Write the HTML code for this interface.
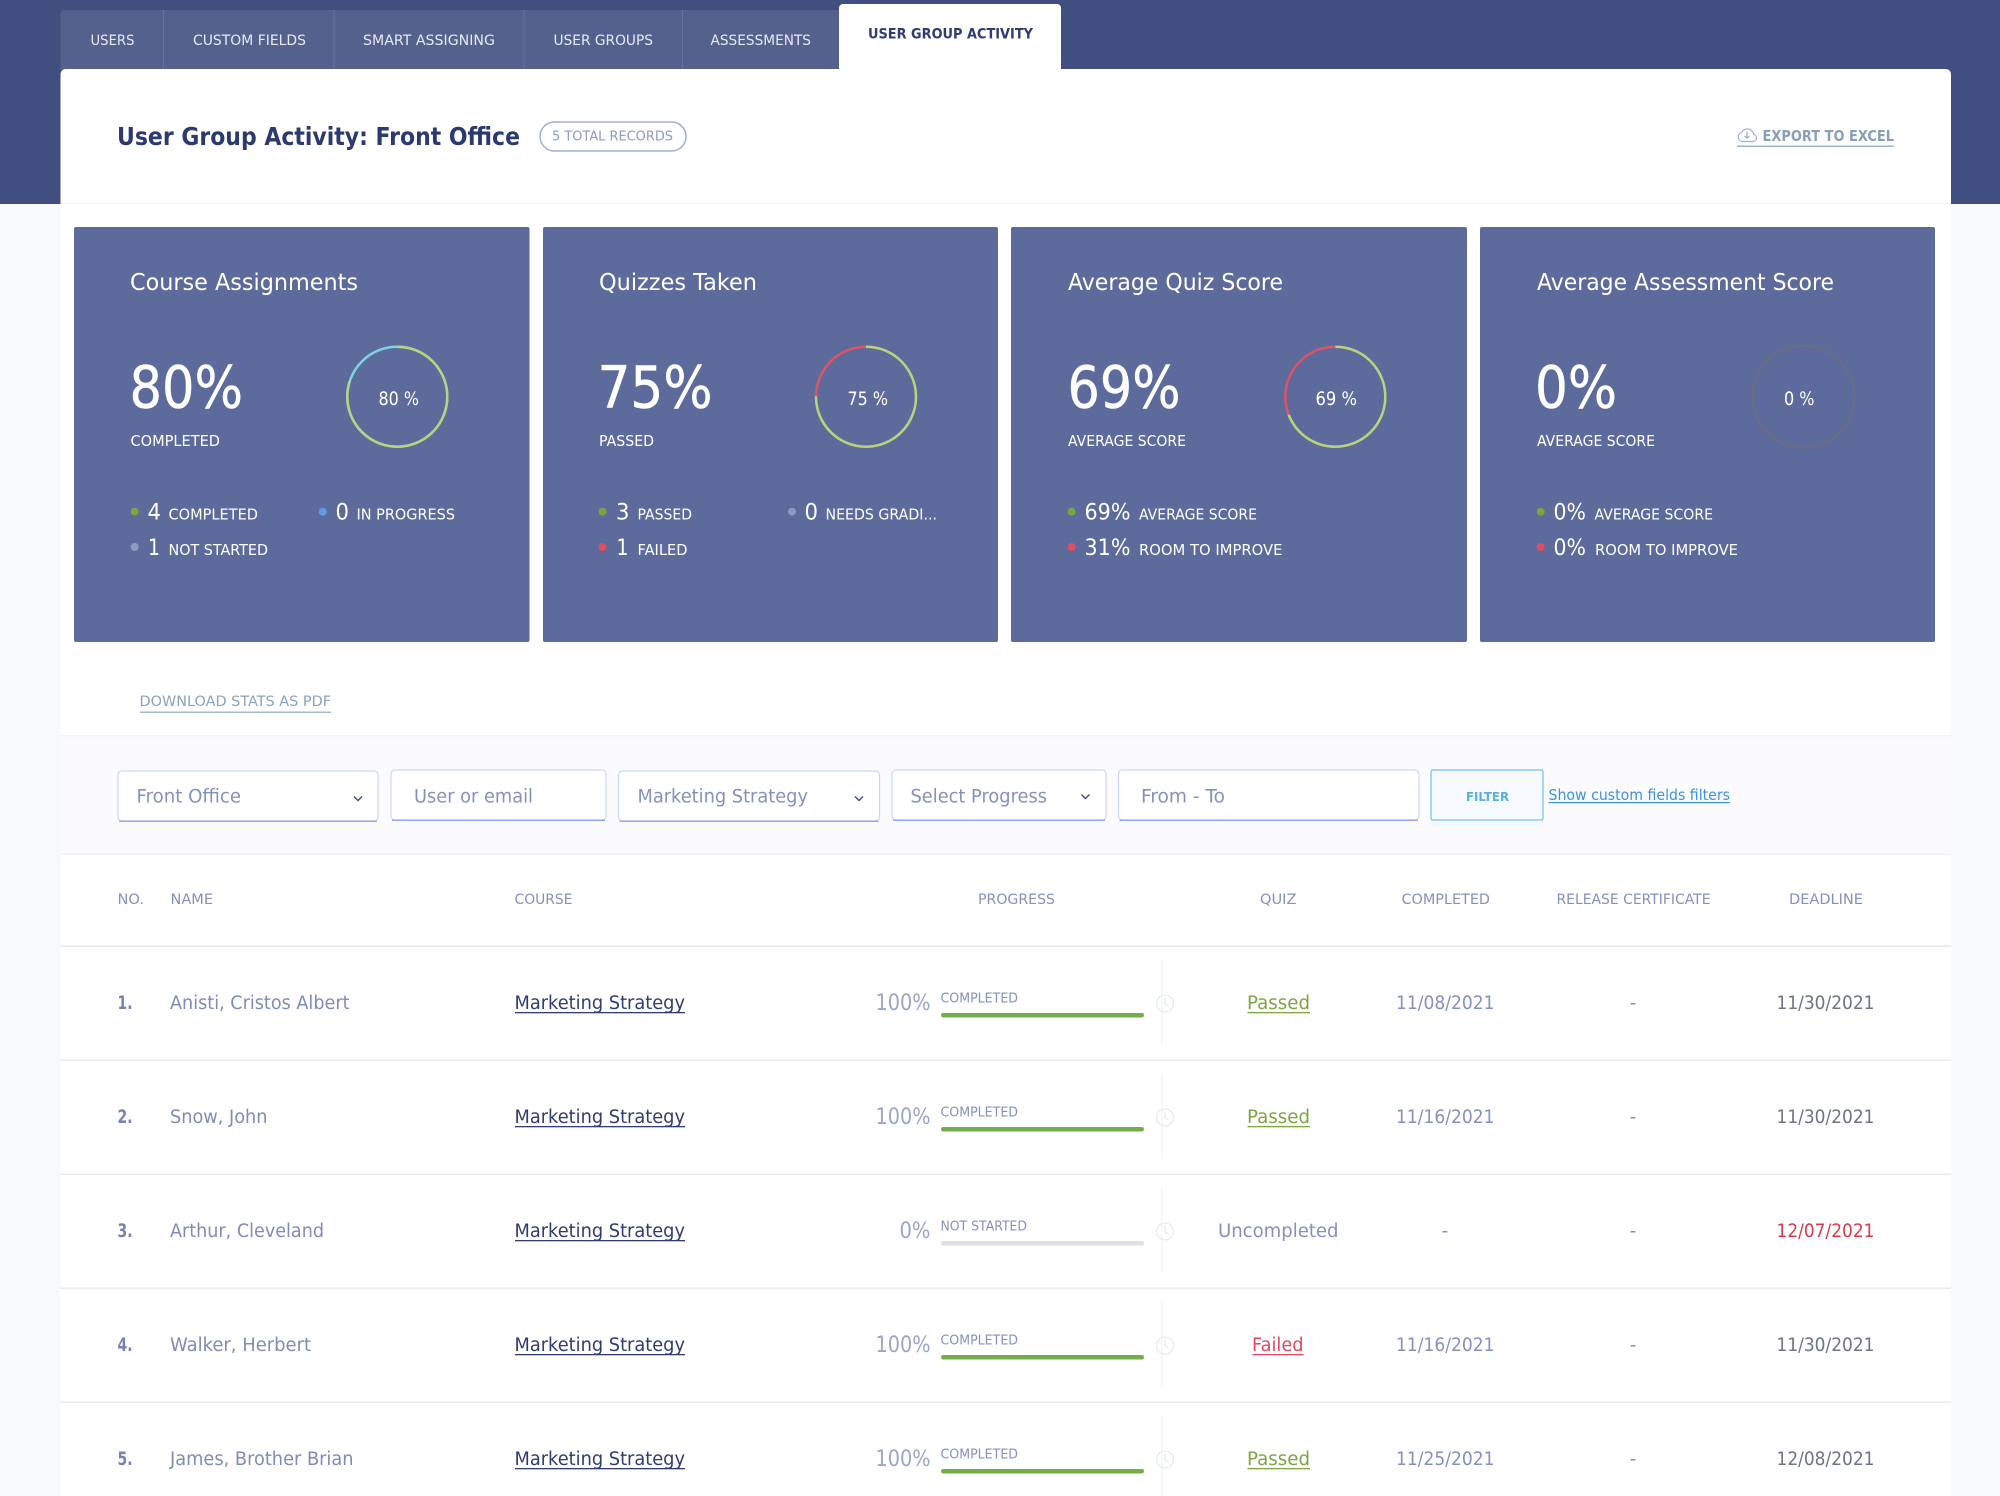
<!DOCTYPE html>
<html><head><meta charset="utf-8"><title>User Group Activity</title>
<style>
html,body{margin:0;padding:0;background:#f8f9fb;width:2000px;height:1496px;overflow:hidden}
svg{display:block}
text{font-family:"DejaVu Sans","Liberation Sans",sans-serif;white-space:pre}
.b{font-weight:700}
.w{fill:#fff}
.t{font-size:14.5px;fill:#e6e9f2}
.h{font-size:14.5px;fill:#8591bd}
.ct{font-size:23.5px;fill:#fff}
.big{font-size:58px;fill:#fff;stroke:#fff;stroke-width:.5px}
.lb{font-size:15px;fill:#fff}
.n{font-size:22.5px;fill:#fff}
.ri{font-size:18.5px;fill:#fff}
.f{font-size:18.5px;fill:#8591bd}
.nm{font-size:18.5px;fill:#7f8bb9}
.no{font-size:18.5px;font-weight:700;fill:#7582b2}
.c{font-size:18.5px;fill:#2f3c72}
.pc{font-size:22.5px;fill:#9aa5cc}
.st{font-size:13.5px;fill:#8591bd}
.dt{font-size:18.5px;fill:#8591bd}
.dl{font-size:18.5px;fill:#6f7484}
.ds{font-size:18.5px;fill:#8591bd;text-anchor:middle}
</style></head><body>
<svg xmlns="http://www.w3.org/2000/svg" width="2000" height="1496" viewBox="0 0 2000 1496">
<rect width="2000" height="1496" fill="#f8f9fb"/>
<rect width="2000" height="204" fill="#414e80"/>
<!-- tabs -->
<path d="M60.500 70V14a4 4 0 0 1 4-4H840V70Z" fill="#54618c"/>
<g stroke="#64719a" stroke-width="1"><line x1="163.500" y1="10" x2="163.500" y2="70"/><line x1="334" y1="10" x2="334" y2="70"/><line x1="524" y1="10" x2="524" y2="70"/><line x1="682.500" y1="10" x2="682.500" y2="70"/></g>
<text class="t" x="90.500" y="45" textLength="44" lengthAdjust="spacingAndGlyphs">USERS</text>
<text class="t" x="193" y="45" textLength="113" lengthAdjust="spacingAndGlyphs">CUSTOM FIELDS</text>
<text class="t" x="363" y="45" textLength="132" lengthAdjust="spacingAndGlyphs">SMART ASSIGNING</text>
<text class="t" x="553.500" y="45" textLength="99.500" lengthAdjust="spacingAndGlyphs">USER GROUPS</text>
<text class="t" x="710.500" y="45" textLength="100.500" lengthAdjust="spacingAndGlyphs">ASSESSMENTS</text>
<!-- main card -->
<path d="M60.500 74a5 5 0 0 1 5-5H1946a5 5 0 0 1 5 5V1496H60.500Z" fill="#fff"/>
<path d="M839 72V8a4 4 0 0 1 4-4H1057a4 4 0 0 1 4 4V72Z" fill="#fff"/>
<text class="b" x="868" y="38.500" font-size="14.500" fill="#2f3c72" textLength="165" lengthAdjust="spacingAndGlyphs">USER GROUP ACTIVITY</text>
<!-- header -->
<text class="b" x="117" y="145" font-size="24.500" fill="#2c3a70" textLength="403" lengthAdjust="spacingAndGlyphs">User Group Activity: Front Office</text>
<rect x="540" y="122" width="146" height="29" rx="14.500" fill="#fff" stroke="#a3add2" stroke-width="1.500"/>
<text x="552" y="140.500" font-size="13.500" fill="#8e9ac4" textLength="121" lengthAdjust="spacingAndGlyphs">5 TOTAL RECORDS</text>
<g fill="none" stroke="#9bb2c8" stroke-width="1.200"><path d="M1742 141.500h11a3.500 3.500 0 0 0 .8-6.900 6.500 6.500 0 0 0-12.300-2 4.600 4.600 0 0 0 .5 8.900Z"/><path d="M1747 131.500v6.500M1744.500 135.800l2.500 2.500 2.500-2.500"/></g>
<text class="b" x="1762.500" y="141" font-size="15.500" fill="#87a0b8" textLength="131.500" lengthAdjust="spacingAndGlyphs">EXPORT TO EXCEL</text>
<rect x="1737" y="145.500" width="157" height="1.500" fill="#9bb4cc"/>
<rect x="60.500" y="203" width="1890.500" height="1" fill="#f1f2f6"/>
<!-- stat cards -->
<g fill="#5c6a9c"><rect x="74" y="227" width="455.500" height="415" rx="2"/><rect x="543" y="227" width="455" height="415" rx="2"/><rect x="1011" y="227" width="456" height="415" rx="2"/><rect x="1480" y="227" width="455" height="415" rx="2"/></g>
<!-- card 1 -->
<text class="ct" x="130" y="290" textLength="228" lengthAdjust="spacingAndGlyphs">Course Assignments</text>
<text class="big" x="129.500" y="407.500" textLength="113.500" lengthAdjust="spacingAndGlyphs">80%</text>
<text class="lb" x="130.500" y="446" textLength="89.500" lengthAdjust="spacingAndGlyphs">COMPLETED</text>
<g fill="none" stroke-width="2.500" transform="rotate(-90 397.300 396.700)"><circle cx="397.300" cy="396.700" r="50" stroke="#7dd3e0"/><circle cx="397.300" cy="396.700" r="50" stroke="#b2d67e" stroke-dasharray="251.300 314.200"/></g>
<text class="ri" x="378.500" y="405" textLength="40.500" lengthAdjust="spacingAndGlyphs">80 %</text>
<circle cx="134.700" cy="511.700" r="4" fill="#7aa63f"/>
<text class="n" x="147.500" y="519.500" textLength="13.500" lengthAdjust="spacingAndGlyphs">4</text>
<text class="lb" x="168.500" y="519.500" textLength="89.500" lengthAdjust="spacingAndGlyphs">COMPLETED</text>
<circle cx="322.700" cy="511.700" r="4" fill="#5f9be8"/>
<text class="n" x="335.500" y="519.500" textLength="13.500" lengthAdjust="spacingAndGlyphs">0</text>
<text class="lb" x="356.500" y="519.500" textLength="98.500" lengthAdjust="spacingAndGlyphs">IN PROGRESS</text>
<circle cx="134.700" cy="547" r="4" fill="#8f9abf"/>
<text class="n" x="148" y="555" textLength="12" lengthAdjust="spacingAndGlyphs">1</text>
<text class="lb" x="168.500" y="555" textLength="99.500" lengthAdjust="spacingAndGlyphs">NOT STARTED</text>
<!-- card 2 -->
<text class="ct" x="599" y="290" textLength="158" lengthAdjust="spacingAndGlyphs">Quizzes Taken</text>
<text class="big" x="597.500" y="407.500" textLength="115" lengthAdjust="spacingAndGlyphs">75%</text>
<text class="lb" x="599" y="446" textLength="55" lengthAdjust="spacingAndGlyphs">PASSED</text>
<g fill="none" stroke-width="2.500" transform="rotate(-90 866 396.700)"><circle cx="866" cy="396.700" r="50" stroke="#dc5468"/><circle cx="866" cy="396.700" r="50" stroke="#b2d67e" stroke-dasharray="235.600 314.200"/></g>
<text class="ri" x="847.500" y="405" textLength="40.500" lengthAdjust="spacingAndGlyphs">75 %</text>
<circle cx="602.600" cy="511.700" r="4" fill="#7aa63f"/>
<text class="n" x="616" y="519.500" textLength="13.500" lengthAdjust="spacingAndGlyphs">3</text>
<text class="lb" x="637.500" y="519.500" textLength="54.500" lengthAdjust="spacingAndGlyphs">PASSED</text>
<circle cx="792" cy="511.700" r="4" fill="#8f9abf"/>
<text class="n" x="804.500" y="519.500" textLength="13.500" lengthAdjust="spacingAndGlyphs">0</text>
<text class="lb" x="825.500" y="519.500" textLength="111.500" lengthAdjust="spacingAndGlyphs">NEEDS GRADI...</text>
<circle cx="602.600" cy="547" r="4" fill="#e04e62"/>
<text class="n" x="616.500" y="555" textLength="12" lengthAdjust="spacingAndGlyphs">1</text>
<text class="lb" x="637.500" y="555" textLength="50" lengthAdjust="spacingAndGlyphs">FAILED</text>
<!-- card 3 -->
<text class="ct" x="1068" y="290" textLength="215" lengthAdjust="spacingAndGlyphs">Average Quiz Score</text>
<text class="big" x="1067.500" y="407.500" textLength="113" lengthAdjust="spacingAndGlyphs">69%</text>
<text class="lb" x="1068" y="446" textLength="118" lengthAdjust="spacingAndGlyphs">AVERAGE SCORE</text>
<g fill="none" stroke-width="2.500" transform="rotate(-90 1335.300 396.700)"><circle cx="1335.300" cy="396.700" r="50" stroke="#dc5468"/><circle cx="1335.300" cy="396.700" r="50" stroke="#b2d67e" stroke-dasharray="216.800 314.200"/></g>
<text class="ri" x="1315.500" y="405" textLength="41.500" lengthAdjust="spacingAndGlyphs">69 %</text>
<circle cx="1071.600" cy="511.700" r="4" fill="#7aa63f"/>
<text class="n" x="1084.500" y="519.500" textLength="46" lengthAdjust="spacingAndGlyphs">69%</text>
<text class="lb" x="1139" y="519.500" textLength="118" lengthAdjust="spacingAndGlyphs">AVERAGE SCORE</text>
<circle cx="1071.600" cy="547" r="4" fill="#e04e62"/>
<text class="n" x="1084.500" y="555" textLength="46" lengthAdjust="spacingAndGlyphs">31%</text>
<text class="lb" x="1139" y="555" textLength="143.500" lengthAdjust="spacingAndGlyphs">ROOM TO IMPROVE</text>
<!-- card 4 -->
<text class="ct" x="1537" y="290" textLength="297" lengthAdjust="spacingAndGlyphs">Average Assessment Score</text>
<text class="big" x="1535" y="407.500" textLength="82" lengthAdjust="spacingAndGlyphs">0%</text>
<text class="lb" x="1537" y="446" textLength="118" lengthAdjust="spacingAndGlyphs">AVERAGE SCORE</text>
<circle cx="1803.400" cy="396.700" r="51" fill="none" stroke="#6b6e7e" stroke-width="2"/>
<text class="ri" x="1784" y="405" textLength="30.500" lengthAdjust="spacingAndGlyphs">0 %</text>
<circle cx="1540.700" cy="511.700" r="4" fill="#7aa63f"/>
<text class="n" x="1553.500" y="519.500" textLength="32.500" lengthAdjust="spacingAndGlyphs">0%</text>
<text class="lb" x="1594.500" y="519.500" textLength="118.500" lengthAdjust="spacingAndGlyphs">AVERAGE SCORE</text>
<circle cx="1540.700" cy="547" r="4" fill="#e04e62"/>
<text class="n" x="1553.500" y="555" textLength="32.500" lengthAdjust="spacingAndGlyphs">0%</text>
<text class="lb" x="1595" y="555" textLength="143" lengthAdjust="spacingAndGlyphs">ROOM TO IMPROVE</text>
<!-- download -->
<text x="139.500" y="706" font-size="14.500" fill="#8ba3b8" textLength="191.500" lengthAdjust="spacingAndGlyphs">DOWNLOAD STATS AS PDF</text>
<rect x="140" y="711.500" width="191" height="1.500" fill="#a3b8cc"/>
<!-- filter band -->
<rect x="60.500" y="736" width="1890.500" height="118" fill="#fbfbfd"/>
<rect x="60.500" y="735" width="1890.500" height="1.500" fill="#f2f3f8"/>
<rect x="60.500" y="853.500" width="1890.500" height="1.500" fill="#f2f3f8"/>
<g fill="#fff" stroke="#ccd5fb" stroke-width="1.200">
<rect x="118" y="771" width="260" height="50" rx="4"/>
<rect x="391" y="770" width="215" height="50" rx="4"/>
<rect x="618.500" y="771" width="261" height="50" rx="4"/>
<rect x="892" y="770" width="214" height="50" rx="4"/>
<rect x="1118.500" y="770" width="300.500" height="50" rx="4"/>
</g>
<g fill="#93a8f0"><rect x="119" y="820.500" width="258" height="1.500"/><rect x="392" y="819.500" width="213" height="1.500"/><rect x="619.500" y="820.500" width="259" height="1.500"/><rect x="893" y="819.500" width="212" height="1.500"/><rect x="1119.500" y="819.500" width="298.500" height="1.500"/></g>
<text class="f" x="136.500" y="802.500" textLength="104.500" lengthAdjust="spacingAndGlyphs">Front Office</text>
<text class="f" x="414" y="802.500" textLength="119" lengthAdjust="spacingAndGlyphs">User or email</text>
<text class="f" x="637.500" y="802.500" textLength="170.500" lengthAdjust="spacingAndGlyphs">Marketing Strategy</text>
<text class="f" x="910.500" y="802.500" textLength="136.500" lengthAdjust="spacingAndGlyphs">Select Progress</text>
<text class="f" x="1141" y="802.500" textLength="84" lengthAdjust="spacingAndGlyphs">From - To</text>
<g fill="none" stroke="#3d4a7a" stroke-width="1.400"><path d="M354 796.500l4 4 4-4"/><path d="M855 796.500l4 4 4-4"/><path d="M1081.500 794.500l4 4 4-4"/></g>
<rect x="1431" y="770" width="112" height="50" rx="1.500" fill="#f6f9fe" stroke="#6ec0ec" stroke-width="1.200"/>
<rect x="1431" y="820.500" width="112" height="6" fill="#eef3fa" opacity=".5"/>
<text class="b" x="1466" y="801" font-size="12.500" fill="#56b0e0" textLength="43" lengthAdjust="spacingAndGlyphs">FILTER</text>
<text x="1548.500" y="800" font-size="15.500" fill="#3f90e0" textLength="181.500" lengthAdjust="spacingAndGlyphs">Show custom fields filters</text>
<rect x="1548.500" y="802" width="181.500" height="1.200" fill="#3f90e0"/>
<!-- table head -->
<text class="h" x="117.500" y="904" textLength="26.500" lengthAdjust="spacingAndGlyphs">NO.</text>
<text class="h" x="170.500" y="904" textLength="42.500" lengthAdjust="spacingAndGlyphs">NAME</text>
<text class="h" x="514.500" y="904" textLength="58" lengthAdjust="spacingAndGlyphs">COURSE</text>
<text class="h" x="978" y="904" textLength="77" lengthAdjust="spacingAndGlyphs">PROGRESS</text>
<text class="h" x="1260" y="904" textLength="36.500" lengthAdjust="spacingAndGlyphs">QUIZ</text>
<text class="h" x="1401.500" y="904" textLength="88.500" lengthAdjust="spacingAndGlyphs">COMPLETED</text>
<text class="h" x="1556.500" y="904" textLength="154" lengthAdjust="spacingAndGlyphs">RELEASE CERTIFICATE</text>
<text class="h" x="1789" y="904" textLength="74" lengthAdjust="spacingAndGlyphs">DEADLINE</text>
<rect x="60.500" y="945.500" width="1890.500" height="1.500" fill="#e6e8f2"/>
<!-- row 1 -->
<g>
<text class="no" x="117.500" y="1009" textLength="15" lengthAdjust="spacingAndGlyphs">1.</text>
<text class="nm" x="170" y="1009" textLength="179.500" lengthAdjust="spacingAndGlyphs">Anisti, Cristos Albert</text>
<text class="c" x="514.500" y="1009" textLength="170.500" lengthAdjust="spacingAndGlyphs">Marketing Strategy</text><rect x="515" y="1012" width="170" height="1.300" fill="#2f3c72"/>
<text class="pc" x="875.500" y="1010" textLength="55" lengthAdjust="spacingAndGlyphs">100%</text>
<text class="st" x="940.500" y="1002.500" textLength="77.500" lengthAdjust="spacingAndGlyphs">COMPLETED</text>
<rect x="941" y="1013" width="203" height="4.500" rx="2.200" fill="#72ae4a"/>
<line x1="1162" y1="960" x2="1162" y2="1045" stroke="#f4f5f9" stroke-width="1.500"/>
<g fill="none" stroke="#e5ebf3" stroke-width="1.300"><circle cx="1165" cy="1003.500" r="8.500"/><path d="M1165 997.500v6.500l3.500 2"/></g>
<text x="1247" y="1009" font-size="18.500" fill="#7aa63f" textLength="63" lengthAdjust="spacingAndGlyphs">Passed</text><rect x="1247.500" y="1012" width="62.500" height="1.300" fill="#7aa63f"/>
<text class="dt" x="1396" y="1009" textLength="98.500" lengthAdjust="spacingAndGlyphs">11/08/2021</text>
<text class="ds" x="1633" y="1009">-</text>
<text class="dl" x="1776.500" y="1009" textLength="98" lengthAdjust="spacingAndGlyphs">11/30/2021</text>
</g>
<rect x="60.500" y="1059.500" width="1890.500" height="1.500" fill="#e6ebf3"/>
<!-- row 2 -->
<g transform="translate(0,114)">
<text class="no" x="117.500" y="1009" textLength="15" lengthAdjust="spacingAndGlyphs">2.</text>
<text class="nm" x="170" y="1009" textLength="97.500" lengthAdjust="spacingAndGlyphs">Snow, John</text>
<text class="c" x="514.500" y="1009" textLength="170.500" lengthAdjust="spacingAndGlyphs">Marketing Strategy</text><rect x="515" y="1012" width="170" height="1.300" fill="#2f3c72"/>
<text class="pc" x="875.500" y="1010" textLength="55" lengthAdjust="spacingAndGlyphs">100%</text>
<text class="st" x="940.500" y="1002.500" textLength="77.500" lengthAdjust="spacingAndGlyphs">COMPLETED</text>
<rect x="941" y="1013" width="203" height="4.500" rx="2.200" fill="#72ae4a"/>
<line x1="1162" y1="960" x2="1162" y2="1045" stroke="#f4f5f9" stroke-width="1.500"/>
<g fill="none" stroke="#e5ebf3" stroke-width="1.300"><circle cx="1165" cy="1003.500" r="8.500"/><path d="M1165 997.500v6.500l3.500 2"/></g>
<text x="1247" y="1009" font-size="18.500" fill="#7aa63f" textLength="63" lengthAdjust="spacingAndGlyphs">Passed</text><rect x="1247.500" y="1012" width="62.500" height="1.300" fill="#7aa63f"/>
<text class="dt" x="1396" y="1009" textLength="98.500" lengthAdjust="spacingAndGlyphs">11/16/2021</text>
<text class="ds" x="1633" y="1009">-</text>
<text class="dl" x="1776.500" y="1009" textLength="98" lengthAdjust="spacingAndGlyphs">11/30/2021</text>
</g>
<rect x="60.500" y="1173.500" width="1890.500" height="1.500" fill="#e6ebf3"/>
<!-- row 3 -->
<g transform="translate(0,228)">
<text class="no" x="117.500" y="1009" textLength="15" lengthAdjust="spacingAndGlyphs">3.</text>
<text class="nm" x="170" y="1009" textLength="154" lengthAdjust="spacingAndGlyphs">Arthur, Cleveland</text>
<text class="c" x="514.500" y="1009" textLength="170.500" lengthAdjust="spacingAndGlyphs">Marketing Strategy</text><rect x="515" y="1012" width="170" height="1.300" fill="#2f3c72"/>
<text class="pc" x="899.500" y="1010" textLength="31" lengthAdjust="spacingAndGlyphs">0%</text>
<text class="st" x="940.500" y="1002.500" textLength="86.500" lengthAdjust="spacingAndGlyphs">NOT STARTED</text>
<rect x="941" y="1013" width="203" height="4.500" rx="2.200" fill="#dddfe6"/>
<line x1="1162" y1="960" x2="1162" y2="1045" stroke="#f4f5f9" stroke-width="1.500"/>
<g fill="none" stroke="#e5ebf3" stroke-width="1.300"><circle cx="1165" cy="1003.500" r="8.500"/><path d="M1165 997.500v6.500l3.500 2"/></g>
<text x="1218" y="1009" font-size="18.500" fill="#8591bd" textLength="120.500" lengthAdjust="spacingAndGlyphs">Uncompleted</text>
<text class="ds" x="1445" y="1009">-</text>
<text class="ds" x="1633" y="1009">-</text>
<text x="1776.500" y="1009" font-size="18.500" fill="#d83a4e" textLength="98" lengthAdjust="spacingAndGlyphs">12/07/2021</text>
</g>
<rect x="60.500" y="1287.500" width="1890.500" height="1.500" fill="#e6ebf3"/>
<!-- row 4 -->
<g transform="translate(0,342)">
<text class="no" x="117.500" y="1009" textLength="15" lengthAdjust="spacingAndGlyphs">4.</text>
<text class="nm" x="170" y="1009" textLength="141" lengthAdjust="spacingAndGlyphs">Walker, Herbert</text>
<text class="c" x="514.500" y="1009" textLength="170.500" lengthAdjust="spacingAndGlyphs">Marketing Strategy</text><rect x="515" y="1012" width="170" height="1.300" fill="#2f3c72"/>
<text class="pc" x="875.500" y="1010" textLength="55" lengthAdjust="spacingAndGlyphs">100%</text>
<text class="st" x="940.500" y="1002.500" textLength="77.500" lengthAdjust="spacingAndGlyphs">COMPLETED</text>
<rect x="941" y="1013" width="203" height="4.500" rx="2.200" fill="#72ae4a"/>
<line x1="1162" y1="960" x2="1162" y2="1045" stroke="#f4f5f9" stroke-width="1.500"/>
<g fill="none" stroke="#e5ebf3" stroke-width="1.300"><circle cx="1165" cy="1003.500" r="8.500"/><path d="M1165 997.500v6.500l3.500 2"/></g>
<text x="1252" y="1009" font-size="18.500" fill="#e04860" textLength="51.500" lengthAdjust="spacingAndGlyphs">Failed</text><rect x="1252.500" y="1012" width="51" height="1.300" fill="#e04860"/>
<text class="dt" x="1396" y="1009" textLength="98.500" lengthAdjust="spacingAndGlyphs">11/16/2021</text>
<text class="ds" x="1633" y="1009">-</text>
<text class="dl" x="1776.500" y="1009" textLength="98" lengthAdjust="spacingAndGlyphs">11/30/2021</text>
</g>
<rect x="60.500" y="1401.500" width="1890.500" height="1.500" fill="#e6ebf3"/>
<!-- row 5 -->
<g transform="translate(0,456)">
<text class="no" x="117.500" y="1009" textLength="15" lengthAdjust="spacingAndGlyphs">5.</text>
<text class="nm" x="170" y="1009" textLength="183.500" lengthAdjust="spacingAndGlyphs">James, Brother Brian</text>
<text class="c" x="514.500" y="1009" textLength="170.500" lengthAdjust="spacingAndGlyphs">Marketing Strategy</text><rect x="515" y="1012" width="170" height="1.300" fill="#2f3c72"/>
<text class="pc" x="875.500" y="1010" textLength="55" lengthAdjust="spacingAndGlyphs">100%</text>
<text class="st" x="940.500" y="1002.500" textLength="77.500" lengthAdjust="spacingAndGlyphs">COMPLETED</text>
<rect x="941" y="1013" width="203" height="4.500" rx="2.200" fill="#72ae4a"/>
<line x1="1162" y1="960" x2="1162" y2="1045" stroke="#f4f5f9" stroke-width="1.500"/>
<g fill="none" stroke="#e5ebf3" stroke-width="1.300"><circle cx="1165" cy="1003.500" r="8.500"/><path d="M1165 997.500v6.500l3.500 2"/></g>
<text x="1247" y="1009" font-size="18.500" fill="#7aa63f" textLength="63" lengthAdjust="spacingAndGlyphs">Passed</text><rect x="1247.500" y="1012" width="62.500" height="1.300" fill="#7aa63f"/>
<text class="dt" x="1396" y="1009" textLength="98.500" lengthAdjust="spacingAndGlyphs">11/25/2021</text>
<text class="ds" x="1633" y="1009">-</text>
<text class="dl" x="1776.500" y="1009" textLength="98" lengthAdjust="spacingAndGlyphs">12/08/2021</text>
</g>
</svg>
</body></html>
